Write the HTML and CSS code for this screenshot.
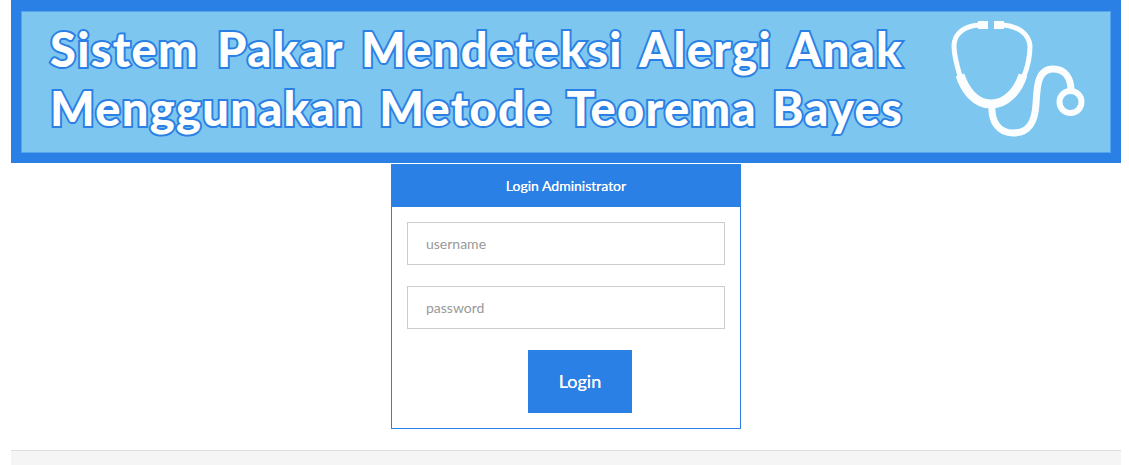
FILE: index.html
```html
<!DOCTYPE html>
<html lang="id">
<head>
  <meta charset="UTF-8">
  <title>Login Administrator</title>
  <meta name="viewport" content="width=device-width, initial-scale=1.0">
  <link rel="stylesheet" href="styles.css">
</head>
<body>
  <header class="banner">
    <h1 class="banner-title">
      <span class="banner-line">Sistem Pakar Mendeteksi Alergi Anak</span>
      <span class="banner-line">Menggunakan Metode Teorema Bayes</span>
    </h1>
    <svg class="banner-icon" width="140" height="120" viewBox="950 18 140 120" fill="none" stroke="#fcfdfe" stroke-linecap="butt" stroke-linejoin="round">
      <rect x="979" y="21" width="10" height="8" fill="#fcfdfe" stroke="none"/>
      <rect x="995" y="21" width="10" height="8" fill="#fcfdfe" stroke="none"/>
      <path d="M980 25C966 26 955 33 955 46C955 56 958 66 961 76" stroke-width="5"/>
      <path d="M1004 25C1018 26 1030 33 1031 46C1031 56 1029 66 1025 76" stroke-width="5"/>
      <path d="M961 75C966 90 976 104 992 104C1008 104 1019 90 1024 75" stroke-width="9"/>
      <path d="M993 106C992 122 1000 133 1014 133C1030 133 1036 122 1037 104C1038 88 1038 69 1054 69C1066 69 1072 78 1072 91" stroke-width="7"/>
      <circle cx="1071.500" cy="102" r="11" stroke-width="6"/>
    </svg>
  </header>

  <form class="login-card">
    <div class="login-head">Login Administrator</div>
    <div class="login-body">
      <input class="login-input" type="text" placeholder="username">
      <input class="login-input" type="password" placeholder="password">
      <button class="login-btn" type="button">Login</button>
    </div>
  </form>

  <footer class="footer"></footer>
</body>
</html>
```

FILE: styles.css
```css
html, body {
  height: 100%;
}
body {
  margin: 0;
  padding: 0 8px 0 11px;
  box-sizing: border-box;
  height: 465px;
  overflow: hidden;
  background: #fff;
  font-family: "Lato", sans-serif;
  display: flex;
  flex-direction: column;
}
.banner {
  height: 163px;
  box-sizing: border-box;
  border: 10px solid #2a80e4;
  border-top-width: 11px;
  background: #7dc6ef;
  box-shadow: inset 0 0 0 1px #56a5ea;
  display: flex;
  justify-content: space-between;
  align-items: flex-start;
  padding: 0 22px 0 29px;
}
.banner-title {
  width: 853px;
  margin: 9px 0 0;
  font-size: 47px;
  line-height: 59px;
  font-weight: 900;
  letter-spacing: 1.3px;
  color: #fff;
  -webkit-text-stroke: 4px #2a80e4;
  paint-order: stroke fill;
}
.banner-line {
  display: block;
  text-align: justify;
  text-align-last: justify;
}
.banner-icon {
  display: block;
  margin-top: 7px;
}
.login-card {
  width: 350px;
  height: 265px;
  box-sizing: border-box;
  margin: 1px auto 0;
  border: 1px solid #2a80e4;
}
.login-head {
  background: #2a80e4;
  color: #fff;
  height: 42px;
  line-height: 41px;
  text-align: center;
  font-size: 14px;
  text-shadow: 0 0 0.4px #fff;
}
.login-body {
  padding: 15px 15px 0;
  display: flex;
  flex-direction: column;
  gap: 21px;
}
.login-input {
  height: 43px;
  box-sizing: border-box;
  border: 1px solid #ccc;
  padding: 0 18px;
  font-family: inherit;
  font-size: 14px;
  background: #fff;
  outline: none;
}
.login-input::placeholder {
  color: #999;
  opacity: 1;
}
.login-btn {
  align-self: flex-start;
  margin-left: 121px;
  width: 104px;
  height: 63px;
  padding: 0 0 2px;
  border: 0;
  background: #2a80e4;
  color: #fff;
  font-family: inherit;
  font-size: 18px;
  text-shadow: 0 0 0.5px #fff;
}
.footer {
  margin-top: 21px;
  flex: 1;
  background: #f5f5f5;
  border-top: 1px solid #ddd;
}
```
